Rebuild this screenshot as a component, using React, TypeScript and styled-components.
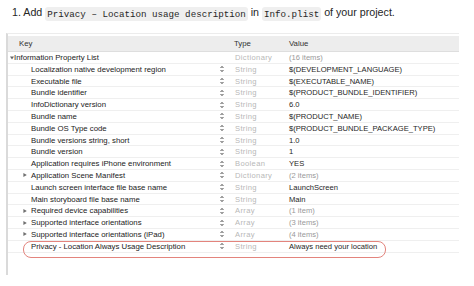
import React from 'react'
import styled, { createGlobalStyle } from 'styled-components'

const GlobalStyle = createGlobalStyle`
  html, body {
    margin: 0;
    padding: 0;
    background: #ffffff;
  }
  body {
    font-family: "Liberation Sans", Arial, sans-serif;
    color: #2a2a2a;
  }
`

type Row = {
  key: string
  type: string
  value: string
  depth: 0 | 1
  toggle?: 'open' | 'closed'
  muted?: boolean
  highlight?: boolean
}

const rows: Row[] = [
  { key: 'Information Property List', type: 'Dictionary', value: '(16 items)', depth: 0, toggle: 'open', muted: true },
  { key: 'Localization native development region', type: 'String', value: '$(DEVELOPMENT_LANGUAGE)', depth: 1 },
  { key: 'Executable file', type: 'String', value: '$(EXECUTABLE_NAME)', depth: 1 },
  { key: 'Bundle identifier', type: 'String', value: '$(PRODUCT_BUNDLE_IDENTIFIER)', depth: 1 },
  { key: 'InfoDictionary version', type: 'String', value: '6.0', depth: 1 },
  { key: 'Bundle name', type: 'String', value: '$(PRODUCT_NAME)', depth: 1 },
  { key: 'Bundle OS Type code', type: 'String', value: '$(PRODUCT_BUNDLE_PACKAGE_TYPE)', depth: 1 },
  { key: 'Bundle versions string, short', type: 'String', value: '1.0', depth: 1 },
  { key: 'Bundle version', type: 'String', value: '1', depth: 1 },
  { key: 'Application requires iPhone environment', type: 'Boolean', value: 'YES', depth: 1 },
  { key: 'Application Scene Manifest', type: 'Dictionary', value: '(2 items)', depth: 1, toggle: 'closed', muted: true },
  { key: 'Launch screen interface file base name', type: 'String', value: 'LaunchScreen', depth: 1 },
  { key: 'Main storyboard file base name', type: 'String', value: 'Main', depth: 1 },
  { key: 'Required device capabilities', type: 'Array', value: '(1 item)', depth: 1, toggle: 'closed', muted: true },
  { key: 'Supported interface orientations', type: 'Array', value: '(3 items)', depth: 1, toggle: 'closed', muted: true },
  { key: 'Supported interface orientations (iPad)', type: 'Array', value: '(4 items)', depth: 1, toggle: 'closed', muted: true },
  { key: 'Privacy - Location Always Usage Description', type: 'String', value: 'Always need your location', depth: 1, highlight: true },
]

const Page = styled.div`
  width: 474px;
  height: 286px;
  overflow: hidden;
`

const Title = styled.p`
  margin: 5px 0 0 12px;
  font-size: 10.7px;
  line-height: 14px;
  color: #262626;
  white-space: nowrap;
`

const Code = styled.code`
  font-family: "Liberation Mono", "Courier New", monospace;
  font-size: 9.2px;
  background: #efefef;
  border-radius: 3px;
  padding: 1.5px 2px;
`

const Panel = styled.div`
  margin: 12px 0 0 6px;
  width: 453px;
  height: 242px;
  box-sizing: border-box;
  border-left: 2px solid #dadada;
  border-top: 1px solid #ececec;
  padding-top: 2px;
  font-size: 7.8px;
`

const Grid = styled.div`
  display: grid;
  grid-template-columns: 220px 57px 174px;
  align-items: center;
  box-sizing: border-box;
  position: relative;
`

const Header = styled(Grid)`
  height: 16px;
  background: #ededed;
  border-bottom: 1px solid #dedede;
  color: #333333;
`

const HeadCell = styled.div<{ $pad: number }>`
  padding-left: ${p => p.$pad}px;
`

const RowLine = styled(Grid)`
  height: 11.8px;
  border-bottom: 1px solid #efefef;
  line-height: 11px;
`

const KeyCell = styled.div<{ $depth: number }>`
  display: flex;
  align-items: center;
  padding-left: ${p => (p.$depth === 0 ? 2 : 15)}px;
  color: #222222;
  white-space: nowrap;
`

const ToggleSlot = styled.span<{ $depth: number }>`
  display: inline-flex;
  align-items: center;
  width: ${p => (p.$depth === 0 ? 4 : 8)}px;
  flex: none;
`

const Stepper = styled.svg`
  margin-left: auto;
  margin-right: 4px;
  flex: none;
`

const TypeCell = styled.div`
  padding-left: 7px;
  font-size: 7.6px;
  color: #b8b8b8;
  letter-spacing: 0.35px;
`

const ValueCell = styled.div<{ $muted?: boolean }>`
  padding-left: 4px;
  font-size: 7.6px;
  color: ${p => (p.$muted ? '#999999' : '#262626')};
  white-space: nowrap;
`

const Outline = styled.div`
  position: absolute;
  top: 0;
  left: 15px;
  width: 363px;
  height: 17px;
  box-sizing: border-box;
  border: 1px solid #e3847d;
  border-radius: 8px;
  pointer-events: none;
`

const Triangle = ({ open }: { open: boolean }) => (
  <svg width="4" height="4" viewBox="0 0 4 4">
    {open ? <path d="M0 0.4 L4 0.4 L2 3.6 Z" fill="#666666" /> : <path d="M0.4 0 L3.8 2 L0.4 4 Z" fill="#707070" />}
  </svg>
)

const StepIcon = () => (
  <Stepper width="4" height="8" viewBox="0 0 4 8">
    <path d="M0.6 3 L2 1.4 L3.4 3" stroke="#4a4a4a" strokeWidth="1" fill="none" />
    <path d="M0.6 5 L2 6.6 L3.4 5" stroke="#4a4a4a" strokeWidth="1" fill="none" />
  </Stepper>
)

export default function App() {
  return (
    <Page>
      <GlobalStyle />
      <Title>
        1. Add <Code>Privacy – Location usage description</Code> in <Code>Info.plist</Code> of your project.
      </Title>
      <Panel>
        <Header>
          <HeadCell $pad={11}>Key</HeadCell>
          <HeadCell $pad={6}>Type</HeadCell>
          <HeadCell $pad={4}>Value</HeadCell>
        </Header>
        {rows.map(r => (
          <RowLine key={r.key}>
            <KeyCell $depth={r.depth}>
              <ToggleSlot $depth={r.depth}>{r.toggle && <Triangle open={r.toggle === 'open'} />}</ToggleSlot>
              {r.key}
              {r.depth > 0 && <StepIcon />}
            </KeyCell>
            <TypeCell>{r.type}</TypeCell>
            <ValueCell $muted={r.muted}>{r.value}</ValueCell>
            {r.highlight && <Outline />}
          </RowLine>
        ))}
      </Panel>
    </Page>
  )
}
